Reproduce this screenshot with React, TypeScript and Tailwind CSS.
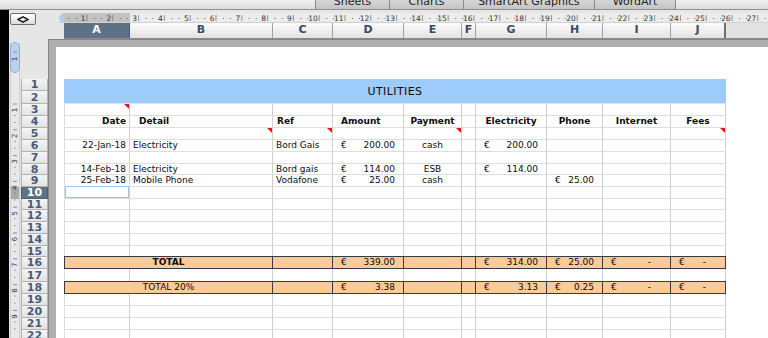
import React from 'react'

type Cell = {
  t?: string
  a?: 'l' | 'r' | 'c'
  b?: boolean
  pad?: string
  eur?: string
  dash?: boolean
  note?: boolean
  sel?: boolean
}

const colW = ['w-[66px]', 'w-[143px]', 'w-[60px]', 'w-[71px]', 'w-[58px]', 'w-[14px]', 'w-[71px]', 'w-[56px]', 'w-[68px]', 'w-[55px]']
const letters = ['A', 'B', 'C', 'D', 'E', 'F', 'G', 'H', 'I', 'J']

// heights for rows 1..22
const rowH = [
  'h-[12px]', 'h-[13px]', 'h-[12px]', 'h-[12px]', 'h-[12px]', 'h-[12px]', 'h-[12px]', 'h-[11px]',
  'h-[12px]', 'h-[12px]', 'h-[11px]', 'h-[12px]', 'h-[12px]', 'h-[12px]', 'h-[11px]', 'h-[12px]',
  'h-[13px]', 'h-[12px]', 'h-[12px]', 'h-[12px]', 'h-[12px]', 'h-[12px]',
]

const data: Record<number, Cell[]> = {
  3: [{ note: true }],
  4: [
    { t: 'Date', a: 'r', b: true },
    { t: 'Detail', b: true, pad: 'pl-[9px]' },
    { t: 'Ref', b: true, pad: 'pl-[4px]' },
    { t: 'Amount', b: true, pad: 'pl-[8px]' },
    { t: 'Payment', a: 'c', b: true },
    {},
    { t: 'Electricity', a: 'c', b: true },
    { t: 'Phone', a: 'c', b: true },
    { t: 'Internet', a: 'c', b: true },
    { t: 'Fees', a: 'c', b: true },
  ],
  5: [{}, { note: true }, { note: true }, {}, { note: true }, {}, {}, {}, {}, { note: true }],
  6: [
    { t: '22-Jan-18', a: 'r' },
    { t: 'Electricity' },
    { t: 'Bord Gais' },
    { eur: '200.00' },
    { t: 'cash', a: 'c' },
    {},
    { eur: '200.00' },
  ],
  8: [
    { t: '14-Feb-18', a: 'r' },
    { t: 'Electricity' },
    { t: 'Bord gais' },
    { eur: '114.00' },
    { t: 'ESB', a: 'c' },
    {},
    { eur: '114.00' },
  ],
  9: [
    { t: '25-Feb-18', a: 'r' },
    { t: 'Mobile Phone' },
    { t: 'Vodafone' },
    { eur: '25.00' },
    { t: 'cash', a: 'c' },
    {},
    {},
    { eur: '25.00' },
  ],
  10: [{ sel: true }],
}

const totals: Record<number, { label: string; bold: boolean; d: string; g: string; h: string }> = {
  16: { label: 'TOTAL', bold: true, d: '339.00', g: '314.00', h: '25.00' },
  18: { label: 'TOTAL 20%', bold: false, d: '3.38', g: '3.13', h: '0.25' },
}

function Note() {
  return (
    <span className="absolute top-0 right-0 w-0 h-0 border-l-[5px] border-l-transparent border-t-[5px] border-t-[#e5161c]" />
  )
}

function Money({ v }: { v: string }) {
  return (
    <div className="flex w-full justify-between pl-[8px] pr-[8px]">
      <span>€</span>
      <span>{v}</span>
    </div>
  )
}

function Dash() {
  return (
    <div className="flex w-full justify-between pl-[8px] pr-[19px]">
      <span>€</span>
      <span>-</span>
    </div>
  )
}

function CellBox({ i, c }: { i: number; c?: Cell }) {
  const align = c?.a === 'r' ? 'text-right pr-[3px]' : c?.a === 'c' ? 'text-center' : c?.pad ?? 'pl-[3px]'
  return (
    <div
      className={`relative ${colW[i]} h-full shrink-0 flex items-center border-r border-[#cfcfcf] ${
        i === 0 ? 'border-l border-l-[#dcdcdc]' : ''
      }`}
    >
      {c?.t && (
        <div className={`w-full whitespace-nowrap ${align} ${c.b ? 'font-bold' : ''}`}>{c.t}</div>
      )}
      {c?.eur && <Money v={c.eur} />}
      {c?.dash && <Dash />}
      {c?.note && <Note />}
      {c?.sel && <div className="absolute inset-0 -top-[1px] border border-[#9fc4ee]" />}
    </div>
  )
}

function TotalRow({ r }: { r: number }) {
  const t = totals[r]
  return (
    <div className={`flex ${rowH[r - 1]} bg-[#fdca99] border-b border-[#3a3a3a]`}>
      <div
        className={`w-[209px] shrink-0 border-l border-r border-[#3a3a3a] flex items-center justify-center ${
          t.bold ? 'font-bold' : ''
        }`}
      >
        {t.label}
      </div>
      <div className="w-[60px] shrink-0 border-r border-[#3a3a3a]" />
      <div className="w-[71px] shrink-0 border-r border-[#3a3a3a] flex items-center">
        <Money v={t.d} />
      </div>
      <div className="w-[58px] shrink-0 border-r border-[#3a3a3a]" />
      <div className="w-[14px] shrink-0 border-r border-[#3a3a3a]" />
      <div className="w-[71px] shrink-0 border-r border-[#3a3a3a] flex items-center">
        <Money v={t.g} />
      </div>
      <div className="w-[56px] shrink-0 border-r border-[#3a3a3a] flex items-center">
        <Money v={t.h} />
      </div>
      <div className="w-[68px] shrink-0 border-r border-[#3a3a3a] flex items-center">
        <Dash />
      </div>
      <div className="w-[55px] shrink-0 border-r border-[#3a3a3a] flex items-center">
        <Dash />
      </div>
    </div>
  )
}

function Sheet() {
  const rows = Array.from({ length: 20 }, (_, k) => k + 3)
  return (
    <div className="flex flex-col w-[662px] text-[9px] leading-[11px] text-[#0c0c0c]">
      <div className="h-[25px] shrink-0 bg-[#9dcbfc] border-b border-[#d8e6f4] flex items-center justify-center text-[11px] tracking-[0.4px]">
        UTILITIES
      </div>
      {rows.map((r) =>
        totals[r] ? (
          <TotalRow key={r} r={r} />
        ) : (
          <div
            key={r}
            className={`flex shrink-0 ${rowH[r - 1]} border-b ${
              r === 15 || r === 17 ? 'border-[#3a3a3a]' : 'border-[#dedede]'
            }`}
          >
            {colW.map((_, i) => (
              <CellBox key={i} i={i} c={data[r]?.[i]} />
            ))}
          </div>
        )
      )}
    </div>
  )
}

function TabStrip() {
  const tabs: [string, string][] = [
    ['Sheets', 'w-[74px]'],
    ['Charts', 'w-[74px]'],
    ['SmartArt Graphics', 'w-[131px]'],
    ['WordArt', 'w-[82px]'],
  ]
  return (
    <div className="h-[10px] flex pl-[315px] border-b border-[#8e8e8e] bg-linear-to-b from-[#f0f0f0] to-[#dddddd] overflow-hidden">
      {tabs.map(([label, w], i) => (
        <div
          key={label}
          className={`${w} h-full shrink-0 border-l border-[#8a8a8a] ${
            i === tabs.length - 1 ? 'border-r' : ''
          } bg-linear-to-b from-[#d6d6d6] to-[#c4c4c4] overflow-hidden flex justify-center`}
        >
          <span className="-mt-[4px] text-[11px] leading-[11px] text-[#1e1e1e] whitespace-nowrap">{label}</span>
        </div>
      ))}
    </div>
  )
}

function ViewButton() {
  return (
    <div className="w-[26px] h-[12px] border border-[#6d6d6d] rounded-[2px] bg-linear-to-b from-white to-[#dcdcdc] flex items-center justify-center">
      <svg width="12" height="7" viewBox="0 0 12 7">
        <polygon points="1,3.5 6,0.9 11,3.5 6,6.1" fill="none" stroke="#1c1c1c" strokeWidth="1.5" />
      </svg>
    </div>
  )
}

function HRuler() {
  const nums = Array.from({ length: 27 }, (_, k) => k + 1)
  return (
    <svg width="710" height="10" className="block shrink-0">
      <rect x="0" y="0" width="710" height="10" fill="#ececec" />
      <rect x="5" y="0" width="67" height="10" fill="#c2c2c2" />
      <path d="M6 0 A5 5 0 0 0 6 10 Z" fill="#b4cce4" />
      <line x1="0" y1="9.5" x2="710" y2="9.5" stroke="#cfcfcf" />
      {[10, 18].map((x) => (
        <rect key={x} x={x} y="5" width="1" height="1" fill="#555" />
      ))}
      {nums.map((n) => {
        const x = 28 + (n - 1) * 25.8
        return (
          <g key={n}>
            <text x={x - 0.5} y="7.5" fontSize="7.5" textAnchor="end" fill="#333" fontFamily="DejaVu Sans, sans-serif">
              {n}
            </text>
            <line x1={x + 1} y1="2" x2={x + 1} y2="8" stroke="#777" strokeWidth="0.8" />
            <rect x={x + 8} y="5" width="1" height="1" fill="#666" />
            <rect x={x + 15} y="5" width="1" height="1" fill="#666" />
          </g>
        )
      })}
    </svg>
  )
}

function VRuler() {
  const nums = Array.from({ length: 9 }, (_, k) => k + 1)
  return (
    <svg width="10" height="296" className="block">
      <rect x="0" y="0" width="10" height="296" fill="#e8e8e8" />
      <line x1="0.5" y1="0" x2="0.5" y2="296" stroke="#cfcfcf" />
      <line x1="9.5" y1="0" x2="9.5" y2="296" stroke="#cfcfcf" />
      <rect x="0.5" y="0.5" width="9" height="30" rx="4.5" fill="#b9d3ee" stroke="#8fb2d8" />
      <rect x="1" y="145" width="8" height="12" fill="#a9a9a9" />
      <text transform="translate(6.8 17) rotate(-90)" fontSize="7" textAnchor="middle" fill="#334" fontFamily="DejaVu Sans, sans-serif">
        1
      </text>
      <line x1="3" y1="10" x2="7" y2="10" stroke="#6c86a6" strokeWidth="0.8" />
      {nums.map((n) => {
        const y = 68 + (n - 1) * 25.8
        return (
          <g key={n}>
            <text
              transform={`translate(6.8 ${y}) rotate(-90)`}
              fontSize="7"
              textAnchor="middle"
              fill="#333"
              fontFamily="DejaVu Sans, sans-serif"
            >
              {n}
            </text>
            <line x1="3" y1={y - 6} x2="7" y2={y - 6} stroke="#777" strokeWidth="0.8" />
            <rect x="4.5" y={y + 5} width="1" height="1" fill="#666" />
            <rect x="4.5" y={y + 12} width="1" height="1" fill="#666" />
          </g>
        )
      })}
    </svg>
  )
}

function ColumnHeaders() {
  return (
    <div className="flex h-[16px] ml-[6px] border-b border-[#8a8a8a] shrink-0">
      {letters.map((l, i) => (
        <div
          key={l}
          className={`${colW[i]} shrink-0 h-full flex items-center justify-center text-[11px] font-bold border-r ${
            i === 0
              ? 'bg-[#5e7286] text-white border-[#4b5d70]'
              : 'bg-linear-to-b from-[#fcfcfc] to-[#e2e2e2] text-[#3b4a62] border-[#a2a2a2]'
          } ${i === 9 ? 'border-r-2 border-r-[#6e6e6e]' : ''}`}
        >
          {l}
        </div>
      ))}
      <div className="flex-1 bg-[#e2e2e2]" />
    </div>
  )
}

function RowHeaders() {
  return (
    <div className="w-[27px] shrink-0 pt-[40px] flex flex-col">
      {rowH.map((h, k) => (
        <div
          key={k}
          className={`${h} shrink-0 flex items-center justify-center text-[11px] font-bold leading-none border-b border-l border-r ${
            k === 9
              ? 'bg-[#5e7286] text-white border-[#4b5d70]'
              : 'bg-linear-to-b from-[#f5f5f5] to-[#e3e3e3] text-[#4a5a7a] border-[#b2b2b2]'
          }`}
        >
          {k + 1}
        </div>
      ))}
    </div>
  )
}

export default function App() {
  return (
    <div className="w-[768px] h-[338px] overflow-hidden bg-[#e6e6e6] font-['DejaVu_Sans',sans-serif] text-[#111]">
      <TabStrip />
      <div className="flex h-[328px]">
        <div className="w-[9px] shrink-0 bg-black" />
        <div className="flex-1 flex flex-col min-w-0">
          <div className="flex h-[29px] shrink-0">
            <div className="w-[49px] shrink-0 pl-[1px] pt-[3px]">
              <ViewButton />
            </div>
            <div className="flex-1 flex flex-col pt-[3px] min-w-0 overflow-hidden">
              <HRuler />
              <ColumnHeaders />
            </div>
          </div>
          <div className="flex flex-1 min-h-0 overflow-hidden">
            <div className="w-[39px] shrink-0 flex">
              <div className="w-[12px] shrink-0 pt-[3px] pl-[1px]">
                <VRuler />
              </div>
              <RowHeaders />
            </div>
            <div className="flex-1 border-t border-l border-[#858585] bg-[#aeaeae] pt-[7px] pl-[7px] min-w-0 overflow-hidden">
              <div className="bg-white h-full pt-[32px] pl-[8px]">
                <Sheet />
              </div>
            </div>
          </div>
        </div>
      </div>
    </div>
  )
}
